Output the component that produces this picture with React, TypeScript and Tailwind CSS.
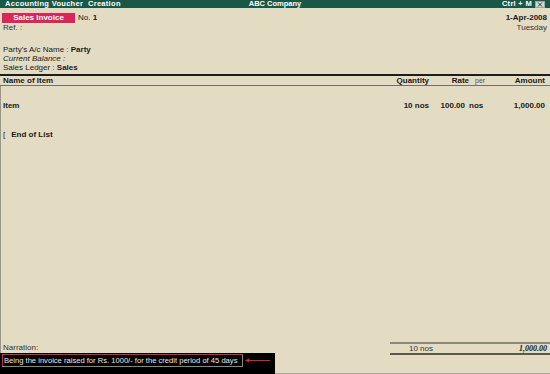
import React from 'react';

// Tally-style sales voucher screen
export default function App() {
  return (
    <div className="w-[550px] h-[374px] bg-[#e3dcc3] flex flex-col overflow-hidden text-[#1a1a1a] font-['Liberation_Sans',Arial,sans-serif] text-[8px] leading-none">
      {/* Title bar */}
      <div className="h-[8px] bg-[#1b5747] flex items-center pl-[5px] pr-[5px] text-white font-bold text-[7.5px]">
        <span className="flex-1 tracking-[0.3px]">Accounting Voucher&nbsp; Creation</span>
        <span className="flex-1 text-center">ABC Company</span>
        <span className="flex-1 flex justify-end items-center gap-[3px]">
          <span className="tracking-[0.3px]">Ctrl + M</span>
          <span className="w-[10px] h-[7px] bg-[#d5d8d0] border border-[#9aa] flex items-center justify-center">
            <svg width="6" height="5" viewBox="0 0 6 5">
              <path d="M1 0.5L5 4.5M5 0.5L1 4.5" stroke="#333" strokeWidth="1" />
            </svg>
          </span>
        </span>
      </div>

      {/* Voucher header */}
      <div className="h-[66px] pt-[5px] flex flex-col">
        <div className="h-[10px] flex items-center justify-between pr-[3px]">
          <div className="flex items-center">
            <span className="ml-[2px] w-[73px] h-[10px] bg-[#d8275a] text-white font-bold flex items-center justify-center">
              Sales Invoice
            </span>
            <span className="ml-[3px]">
              No. <span className="font-bold">1</span>
            </span>
          </div>
          <span className="font-bold">1-Apr-2008</span>
        </div>
        <div className="h-[10px] flex items-center justify-between pl-[3px] pr-[3px] text-[#333]">
          <span>Ref. :</span>
          <span>Tuesday</span>
        </div>
        <div className="mt-[12px] pl-[3px] flex flex-col">
          <div className="h-[9px] flex items-center">
            Party's A/c Name :&nbsp; <span className="font-bold">Party</span>
          </div>
          <div className="h-[9px] flex items-center italic">Current Balance :</div>
          <div className="h-[9px] flex items-center">
            Sales Ledger :&nbsp; <span className="font-bold">Sales</span>
          </div>
        </div>
      </div>

      {/* Column headings */}
      <div className="h-[12px] border-t-2 border-b border-t-[#1e1e1e] border-b-[#707070] flex items-center pl-[3px] pr-[5px] font-bold">
        <span className="flex-1">Name of Item</span>
        <span className="w-[60px] text-right">Quantity</span>
        <span className="w-[40px] text-right">Rate</span>
        <span className="w-[38px] pl-[6px] font-normal text-[#555] text-[7px]">per</span>
        <span className="flex-1 max-w-[38px] text-right">Amount</span>
      </div>

      {/* Items */}
      <div className="flex-1 border-l border-[#9a9686] flex flex-col pr-[5px]">
        <div className="mt-[15px] h-[9px] flex items-center pl-[2px] font-bold">
          <span className="flex-1">Item</span>
          <span className="w-[60px] text-right">10 nos</span>
          <span className="w-[36px] text-right">100.00</span>
          <span className="w-[42px] pl-[4px]">nos</span>
          <span className="w-[38px] text-right">1,000.00</span>
        </div>
        <div className="mt-[20px] h-[9px] flex items-center pl-[2px] font-bold">
          <span className="mr-[6px] font-normal">[</span>End of List
        </div>
      </div>

      {/* Footer: narration and totals */}
      <div className="h-[32px] flex">
        <div className="w-[390px] flex flex-col">
          <div className="h-[11px] border-l border-[#9a9686] pl-[2px] flex items-center text-[#333]">Narration:</div>
          <div className="flex-1 flex">
            <div className="w-[275px] bg-black pt-[1px] pl-[2px] flex items-start">
              <div className="h-[13px] w-[241px] border border-[#8a8a7a] border-t-[#c0304a] border-l-[#c0304a] flex items-center pl-[1px] text-[#e8e8e8] text-[7.6px] whitespace-nowrap">
                Being the invoice raised for Rs. 1000/- for the credit period of 45 days
              </div>
              <svg width="28" height="13" viewBox="0 0 28 13" className="ml-[1px]">
                <path d="M1 6.5L5 4.5V8.5Z" fill="#e0203a" />
                <path d="M4 6.5H26" stroke="#e0203a" strokeWidth="1" />
              </svg>
            </div>
            <div className="flex-1 border-b border-[#a8a496]" />
          </div>
        </div>
        <div className="flex-1 flex flex-col">
          <div className="h-[13px] border-t-2 border-b-2 border-t-[#8c8878] border-b-[#5c5a50] flex items-center pr-[3px] text-[#333]">
            <span className="flex-1 pl-[19px]">10 nos</span>
            <span className="font-bold italic text-[#1a1a1a] font-['Liberation_Serif',serif]">1,000.00</span>
          </div>
          <div className="flex-1 border-b border-[#a8a496]" />
        </div>
      </div>
    </div>
  );
}
